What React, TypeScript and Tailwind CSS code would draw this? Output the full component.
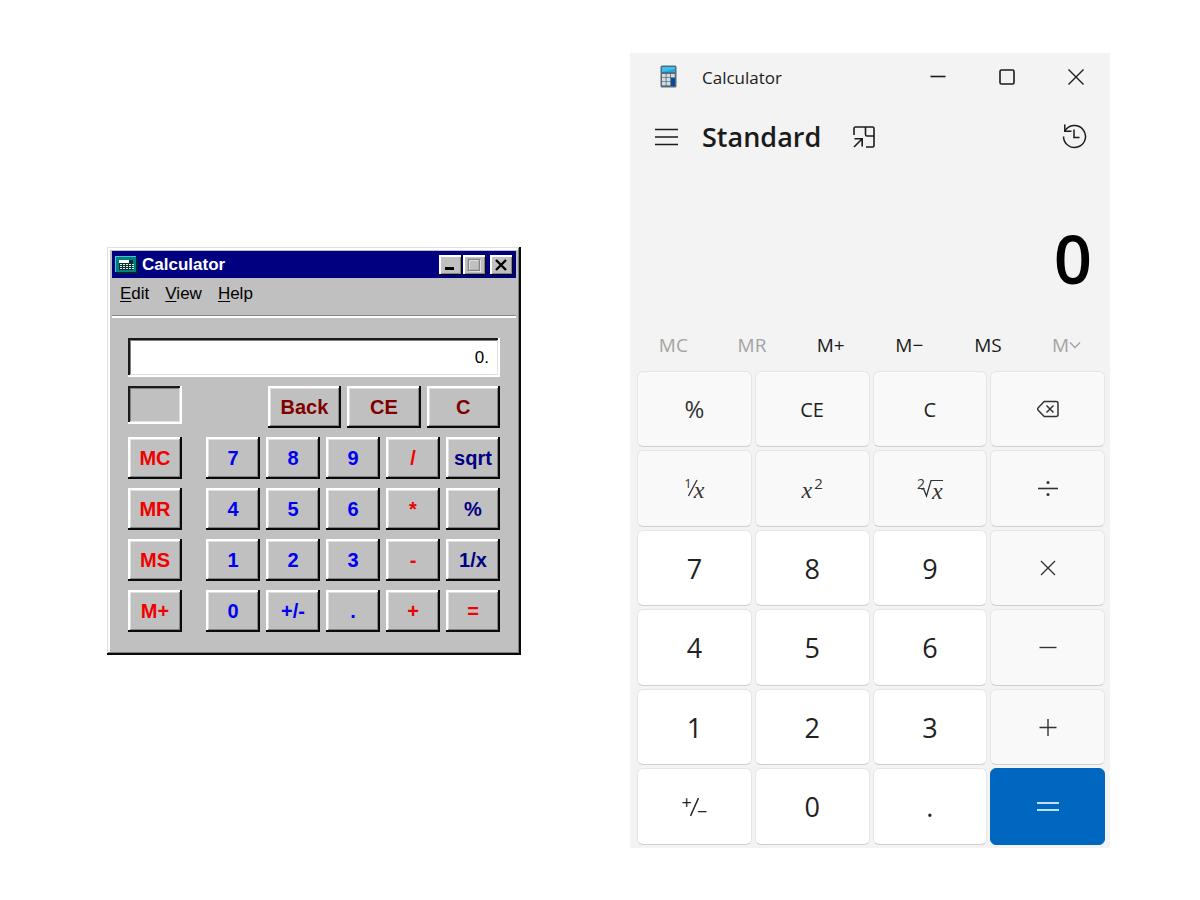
import type { ReactNode } from "react";

type Tone = "maroon" | "red" | "blue" | "navy";

const toneClass: Record<Tone, string> = {
  maroon: "text-[#800000]",
  red: "text-[#f00000]",
  blue: "text-[#0000f0]",
  navy: "text-[#000080]",
};

const raised =
  "shadow-[inset_-2px_-2px_#0a0a0a,inset_2px_2px_#ffffff,inset_-3px_-3px_#858585,inset_3px_3px_#dfdfdf]";
const raisedSmall =
  "shadow-[inset_-1px_-1px_#0a0a0a,inset_2px_2px_#ffffff,inset_-2px_-2px_#858585]";
const sunken =
  "shadow-[inset_-2px_-2px_#ffffff,inset_2px_2px_#1a1a1a,inset_-3px_-3px_#dfdfdf,inset_3px_3px_#808080]";

function ClassicKey({ label, tone }: { label: string; tone: Tone }) {
  return (
    <button
      type="button"
      className={`flex h-[42px] w-full items-center justify-center bg-[#c0c0c0] text-[20px] leading-6 font-bold ${raised} ${toneClass[tone]}`}
    >
      {label}
    </button>
  );
}

const classicRows: { memory: string; keys: [string, Tone][] }[] = [
  { memory: "MC", keys: [["7", "blue"], ["8", "blue"], ["9", "blue"], ["/", "red"], ["sqrt", "navy"]] },
  { memory: "MR", keys: [["4", "blue"], ["5", "blue"], ["6", "blue"], ["*", "red"], ["%", "navy"]] },
  { memory: "MS", keys: [["1", "blue"], ["2", "blue"], ["3", "blue"], ["-", "red"], ["1/x", "navy"]] },
  { memory: "M+", keys: [["0", "blue"], ["+/-", "blue"], [".", "blue"], ["+", "red"], ["=", "red"]] },
];

function ClassicIcon() {
  return (
    <svg width="23" height="18" viewBox="0 0 23 18" shapeRendering="crispEdges" aria-hidden="true">
      <rect x="2" y="2" width="21" height="16" fill="#00203c" />
      <rect width="21" height="16" fill="#40c8c0" />
      <rect x="1" y="1" width="20" height="15" fill="#008080" />
      <rect x="4" y="4" width="14" height="10" fill="#0a3030" />
      <rect x="4" y="4" width="10" height="3" fill="#ffffff" />
      {[8, 10, 12].map((y) =>
        [5, 8, 11, 14, 17].map((x) => (
          <rect key={`${x}-${y}`} x={x} y={y} width="2" height="1" fill="#d8f4f0" />
        )),
      )}
    </svg>
  );
}

function ClassicCalculator() {
  const chrome = `flex h-5 w-[23px] items-center justify-center bg-[#c0c0c0] ${raisedSmall}`;
  return (
    <section
      aria-label="Classic calculator"
      className="mt-0.5 w-full max-w-[414px] bg-[#c0c0c0] px-[5px] pt-1 pb-[23px] font-['Liberation_Sans',Arial,sans-serif] text-black shadow-[inset_-2px_-2px_#0a0a0a,inset_1px_1px_#e0e0e0,inset_-3px_-3px_#808080,inset_3px_3px_#ffffff]"
    >
      <header className="flex h-[27px] items-center bg-[#000080] pr-[3px] pl-[3px]">
        <ClassicIcon />
        <h1 className="flex-1 pl-1 text-[17px] leading-5 font-bold text-white">Calculator</h1>
        <button type="button" aria-label="Minimize" className={chrome}>
          <svg width="15" height="12" viewBox="0 0 15 12" aria-hidden="true">
            <rect x="2" y="8" width="9" height="3" fill="#000" />
          </svg>
        </button>
        <button type="button" aria-label="Maximize" className={`mr-1 ml-px ${chrome}`}>
          <svg width="15" height="14" viewBox="0 0 15 14" aria-hidden="true">
            <rect x="2.5" y="2.5" width="11" height="11" fill="none" stroke="#fff" />
            <rect x="1.5" y="1.5" width="11" height="11" fill="none" stroke="#858585" strokeWidth="1.5" />
          </svg>
        </button>
        <button type="button" aria-label="Close" className={chrome}>
          <svg width="15" height="12" viewBox="0 0 15 12" aria-hidden="true">
            <path d="M2 1 12 11M12 1 2 11" stroke="#000" strokeWidth="2.4" />
          </svg>
        </button>
      </header>

      <nav className="flex h-[38px] gap-4 border-b border-[#858585] pt-1.5 pl-2 text-[17px] leading-5">
        {["Edit", "View", "Help"].map((item) => (
          <button key={item} type="button" className="h-5">
            <span className="underline underline-offset-2">{item[0]}</span>
            {item.slice(1)}
          </button>
        ))}
      </nav>
      <div className="h-0.5 bg-white" />

      <div className="flex flex-col gap-[9px] px-4 pt-5">
        <input
          readOnly
          aria-label="Result"
          defaultValue="0."
          className={`h-[39px] w-full bg-white pr-[11px] text-right text-[17px] outline-none ${sunken}`}
        />
        <div className="grid grid-cols-[54fr_294fr] gap-6">
          <output aria-label="Memory" className={`h-[38px] ${sunken}`} />
          <div className="flex justify-end">
            <div className="grid w-[79%] grid-cols-3 gap-1.5">
              <ClassicKey label="Back" tone="maroon" />
              <ClassicKey label="CE" tone="maroon" />
              <ClassicKey label="C" tone="maroon" />
            </div>
          </div>
        </div>
        {classicRows.map((row) => (
          <div key={row.memory} className="grid grid-cols-[54fr_294fr] gap-6">
            <ClassicKey label={row.memory} tone="red" />
            <div className="grid grid-cols-5 gap-1.5">
              {row.keys.map(([label, tone]) => (
                <ClassicKey key={label} label={label} tone={tone} />
              ))}
            </div>
          </div>
        ))}
      </div>
    </section>
  );
}

function ModernIcon() {
  return (
    <svg width="17" height="23" viewBox="0 0 17 23" aria-hidden="true">
      <rect x="0.5" y="0.5" width="16" height="22" rx="1.5" fill="#5b6b7b" />
      <rect x="2" y="2" width="13" height="5" fill="#35c3f2" />
      <path d="M2 7h13V4z" fill="#1fa7e0" />
      {[9, 13, 17].map((y) =>
        [2, 6.5, 11].map((x) => (
          <rect key={`${x}-${y}`} x={x} y={y} width="3.7" height="3.3" fill="#d3dbe4" />
        )),
      )}
      <rect x="11" y="13" width="4" height="8" fill="#0b4a94" />
    </svg>
  );
}

function Stroke({ size, children, width = 1.4 }: { size: number; children: ReactNode; width?: number }) {
  return (
    <svg
      width={size}
      height={size}
      viewBox={`0 0 ${size} ${size}`}
      fill="none"
      stroke="currentColor"
      strokeWidth={width}
      aria-hidden="true"
    >
      {children}
    </svg>
  );
}

const serifX = "font-['Liberation_Serif','Times_New_Roman',serif] italic";

type ModernKeyData = { name: string; face: ReactNode; kind: "digit" | "word" | "op" | "equals" };

const digit = (d: string): ModernKeyData => ({ name: d, face: d, kind: "digit" });

const modernKeys: ModernKeyData[] = [
  { name: "Percent", face: <span className="text-[24px]">%</span>, kind: "op" },
  { name: "Clear entry", face: "CE", kind: "word" },
  { name: "Clear", face: "C", kind: "word" },
  {
    name: "Backspace",
    face: (
      <Stroke size={22} width={1.5}>
        <path d="M7.200 3.500H19a2 2 0 0 1 2 2v11a2 2 0 0 1-2 2H7.200L1.200 12.300a1.800 1.800 0 0 1 0-2.600Z" strokeLinejoin="round" />
        <path d="m9.500 7.500 7 7M16.500 7.500l-7 7" />
      </Stroke>
    ),
    kind: "op",
  },
  {
    name: "Reciprocal",
    face: (
      <span className="flex items-center leading-6">
        <span className="pb-2.5 text-[13px]">1</span>
        <svg width="10" height="20" viewBox="0 0 10 20" stroke="currentColor" strokeWidth="1.3" aria-hidden="true" className="-mx-1">
          <path d="M0.500 18 9 2" />
        </svg>
        <span className={`pt-1 text-[24px] ${serifX}`}>x</span>
      </span>
    ),
    kind: "op",
  },
  {
    name: "Square",
    face: (
      <span className="flex items-center gap-0.5 leading-6">
        <span className={`pt-1 text-[24px] ${serifX}`}>x</span>
        <span className="pb-2.5 text-[15px]">2</span>
      </span>
    ),
    kind: "op",
  },
  {
    name: "Square root",
    face: (
      <span className="flex items-center leading-5">
        <span className="pb-2 text-[14px]">2</span>
        <svg width="11" height="20" viewBox="0 0 11 20" fill="none" stroke="currentColor" strokeWidth="1.3" aria-hidden="true" className="-ml-1">
          <path d="M0.500 11.500 2.500 10.500 5.500 18 10 2.600H11" />
        </svg>
        <span className="flex h-4 items-center border-t border-current">
          <span className={`pt-1 text-[24px] leading-4 ${serifX}`}>x</span>
        </span>
      </span>
    ),
    kind: "op",
  },
  {
    name: "Divide",
    face: (
      <Stroke size={22} width={1.6}>
        <path d="M1 11.500h20" />
        <circle cx="11" cy="5.500" r="1.500" fill="currentColor" stroke="none" />
        <circle cx="11" cy="17.500" r="1.500" fill="currentColor" stroke="none" />
      </Stroke>
    ),
    kind: "op",
  },
  digit("7"),
  digit("8"),
  digit("9"),
  { name: "Multiply", face: <Stroke size={22}><path d="m4 4 14 14M18 4 4 18" /></Stroke>, kind: "op" },
  digit("4"),
  digit("5"),
  digit("6"),
  { name: "Minus", face: <Stroke size={22}><path d="M2.500 11.500h17" /></Stroke>, kind: "op" },
  digit("1"),
  digit("2"),
  digit("3"),
  { name: "Plus", face: <Stroke size={22}><path d="M2.500 11.500h17M11 3v17" /></Stroke>, kind: "op" },
  {
    name: "Positive negative",
    face: (
      <span className="flex items-center leading-6">
        <span className="pb-2.5 text-[18px]">+</span>
        <svg width="9" height="20" viewBox="0 0 9 20" stroke="currentColor" strokeWidth="1.500" aria-hidden="true" className="-mx-0.5">
          <path d="M0.500 19 8.500 1" />
        </svg>
        <span className="pt-2 text-[18px]">−</span>
      </span>
    ),
    kind: "digit",
  },
  digit("0"),
  { name: "Decimal separator", face: ".", kind: "digit" },
  { name: "Equals", face: <Stroke size={22} width={2.2}><path d="M0 8h22M0 15h22" /></Stroke>, kind: "equals" },
];

const kindClass = {
  digit: "border-[#e6e6e6] border-b-[#cfcfcf] bg-white pt-0.5 text-[27px] text-[#222222]",
  word: "border-[#e6e6e6] border-b-[#cfcfcf] bg-[#f9f9f9] pt-0.5 text-[20px] text-[#222222]",
  op: "border-[#e6e6e6] border-b-[#cfcfcf] bg-[#f9f9f9] text-[19px] text-[#333333]",
  equals: "border-[#0067c0] bg-[#0067c0] text-[#c4e0f8]",
};

const memoryKeys = [
  { label: "MC", off: true },
  { label: "MR", off: true },
  { label: "M+", off: false },
  { label: "M−", off: false },
  { label: "MS", off: false },
];

function ModernCalculator() {
  return (
    <section
      aria-label="Modern calculator"
      className="w-full max-w-[480px] bg-[#f3f3f3] pb-[3px] font-['Open_Sans','Noto_Sans',sans-serif] text-[#1b1b1b]"
    >
      <header className="flex h-12 items-center pr-[26px] pl-[30px]">
        <ModernIcon />
        <h1 className="flex-1 pt-0.5 pl-[25px] text-[17px] leading-6">Calculator</h1>
        <div className="flex gap-[53px]">
          <button type="button" aria-label="Minimize">
            <Stroke size={16}><path d="M0.500 7.500h15" strokeWidth="1.600" /></Stroke>
          </button>
          <button type="button" aria-label="Maximize">
            <Stroke size={16}><rect x="1" y="1" width="14" height="14" rx="1.500" strokeWidth="1.600" /></Stroke>
          </button>
          <button type="button" aria-label="Close">
            <Stroke size={16}><path d="m0.500 0.500 15 15M15.500 0.500l-15 15" /></Stroke>
          </button>
        </div>
      </header>

      <div className="flex h-[72px] items-center pr-[23px] pl-[25px]">
        <button type="button" aria-label="Open navigation">
          <Stroke size={23}><path d="M0 4.500h23M0 12h23M0 19.500h23" /></Stroke>
        </button>
        <h2 className="pl-6 text-[27px] leading-9 font-semibold">Standard</h2>
        <button type="button" aria-label="Keep on top" className="ml-[31px]">
          <Stroke size={24} width={1.6}>
            <path d="M2 10V3.500a1.500 1.500 0 0 1 1.500-1.500H20.500a1.500 1.500 0 0 1 1.500 1.500V20.500a1.500 1.500 0 0 1-1.500 1.500H14" />
            <path d="M13.500 2V9.500a1.500 1.500 0 0 0 1.500 1.500H22" />
            <path d="M2 22 10 14M2.500 13.800H10.200V21.500" />
          </Stroke>
        </button>
        <button type="button" aria-label="History" className="ml-auto">
          <Stroke size={25} width={1.5}>
            <path d="M2.970 7A11 11 0 1 1 1.500 12.500" />
            <path d="M2.800 0.500V7.300H9.500" />
            <path d="M12 5.500V13.500H17.500" />
          </Stroke>
        </button>
      </div>

      <div className="flex h-[146px] justify-end pt-[39px] pr-[18px]">
        <output aria-label="Result" className="text-[67px] leading-[92px] font-semibold text-black">
          0
        </output>
      </div>

      <div className="grid h-[52px] grid-cols-6 pt-px pr-1 pl-1 text-[19px]">
        {memoryKeys.map((key) => (
          <button key={key.label} type="button" disabled={key.off} className="disabled:text-[#a3a3a3]">
            {key.label}
          </button>
        ))}
        <button type="button" disabled aria-label="Memory list" className="flex items-center justify-center text-[#a3a3a3]">
          M
          <svg width="12" height="8" viewBox="0 0 12 8" fill="none" stroke="currentColor" strokeWidth="1.400" aria-hidden="true">
            <path d="m1 1.500 5 5 5-5" />
          </svg>
        </button>
      </div>

      <div className="grid h-[474px] grid-cols-4 grid-rows-6 gap-[3px] pr-[5px] pl-[7px]">
        {modernKeys.map((key) => (
          <button
            key={key.name}
            type="button"
            aria-label={key.name}
            className={`flex items-center justify-center rounded-md border ${kindClass[key.kind]}`}
          >
            {key.face}
          </button>
        ))}
      </div>
    </section>
  );
}

export default function App() {
  return (
    <main className="flex min-h-screen items-center justify-between gap-8 bg-white pr-[90px] pl-[107px]">
      <ClassicCalculator />
      <ModernCalculator />
    </main>
  );
}
